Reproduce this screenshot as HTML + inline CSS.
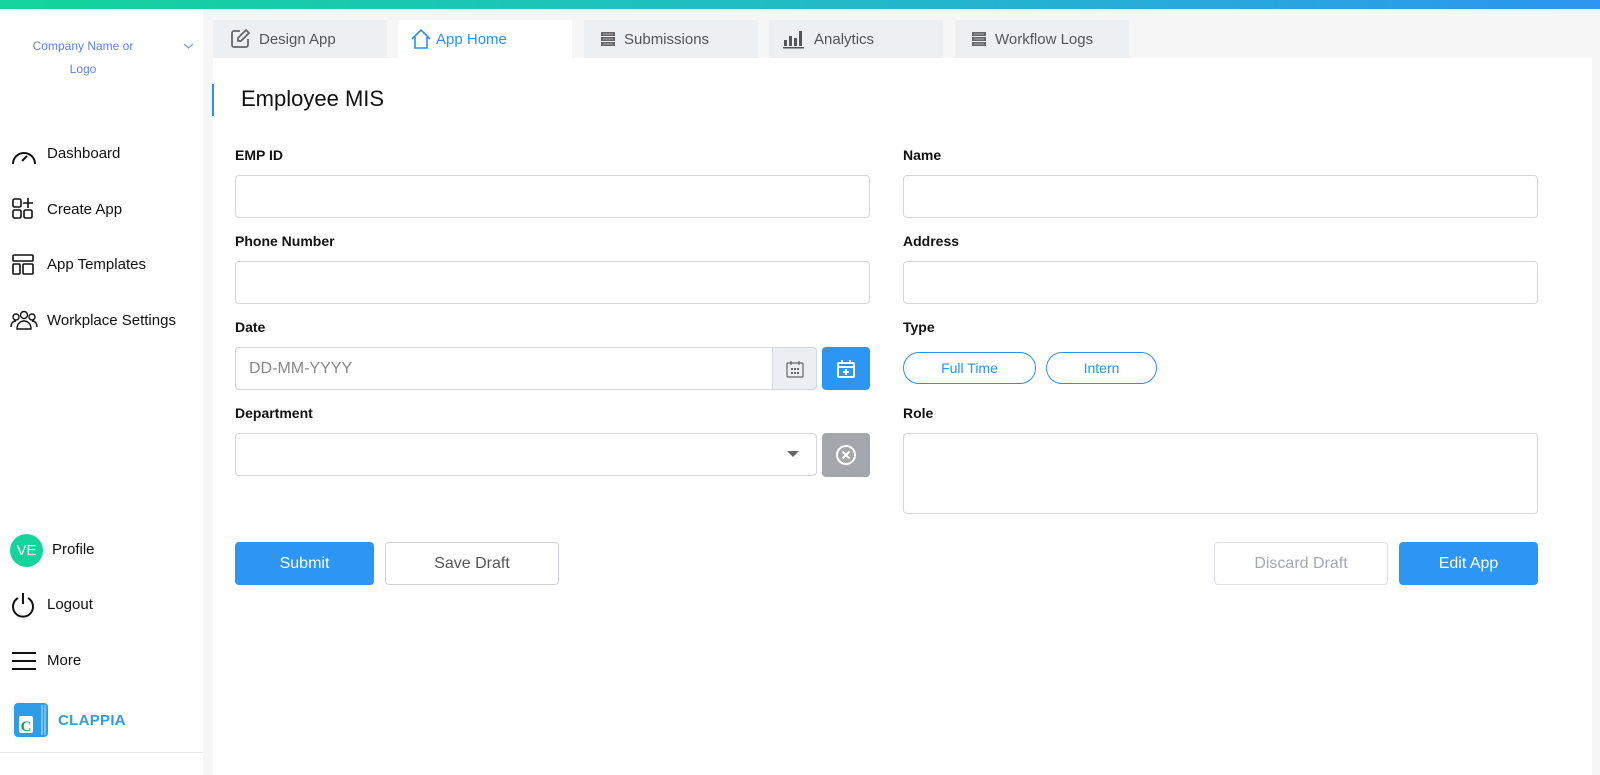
<!DOCTYPE html>
<html><head><meta charset="utf-8"><style>
*{box-sizing:border-box;margin:0;padding:0}
body{width:1600px;height:775px;overflow:hidden;font-family:"Liberation Sans",Arial,sans-serif;background:#f6f6f7;position:relative;color:#111}
.top{position:absolute;left:0;top:0;width:1600px;height:9px;background:linear-gradient(90deg,#13d49a,#22b9c9 55%,#2e95f0)}
.side{position:absolute;left:0;top:9px;width:203px;height:766px;background:#fff}
.abs{position:absolute}
.nav{position:absolute;left:47px;font-size:15px;color:#111}
.tab{position:absolute;top:20px;height:38px;width:174px;background:#eeeff1;color:#555;font-size:15px;display:flex;align-items:center;padding-left:16px;gap:8px}
.panel{position:absolute;left:213px;top:58px;width:1379px;height:717px;background:#fff}
.lbl{position:absolute;font-size:14px;font-weight:bold;color:#111}
.inp{position:absolute;height:43px;border:1px solid #d3d6da;border-radius:4px;background:#fff}
.btn{position:absolute;top:542px;height:43px;border-radius:4px;font-size:16px;display:flex;align-items:center;justify-content:center}
</style></head><body>
<div class="top"></div>
<div class="side"></div>
<div class="abs" style="left:20px;top:35px;width:126px;text-align:center;font-size:12px;line-height:23px;color:#5f82e6">Company Name or Logo</div>
<svg class="abs" style="left:183px;top:42px" width="11" height="8"><path d="M1 2l4.5 4L10 2" stroke="#7a9ae6" fill="none" stroke-width="1.2"/></svg>

<svg class="abs" style="left:10px;top:144px" width="28" height="22" viewBox="0 0 28 22"><path d="M3 20A11 11 0 1 1 25 20" stroke="#111" stroke-width="2" fill="none"/><path d="M12 17l5-5" stroke="#111" stroke-width="2"/></svg>
<div class="nav" style="top:145px">Dashboard</div>
<svg class="abs" style="left:12px;top:198px" width="24" height="22" viewBox="0 0 24 22" fill="none" stroke="#111" stroke-width="1.6"><rect x="1" y="1" width="8" height="8" rx="1.5"/><rect x="1" y="12" width="8" height="8" rx="1.5"/><rect x="12" y="12" width="8" height="8" rx="1.5"/><path d="M16 0v10M11 5h10"/></svg>
<div class="nav" style="top:201px">Create App</div>
<svg class="abs" style="left:12px;top:254px" width="24" height="22" viewBox="0 0 24 22" fill="none" stroke="#111" stroke-width="1.6"><rect x="1" y="1" width="20" height="6" rx="1"/><rect x="1" y="10" width="7" height="10" rx="1"/><rect x="11" y="10" width="10" height="10" rx="1"/></svg>
<div class="nav" style="top:256px">App Templates</div>
<svg class="abs" style="left:10px;top:310px" width="28" height="20" viewBox="0 0 28 20" fill="none" stroke="#111" stroke-width="1.4"><circle cx="14" cy="5" r="3.5"/><circle cx="6" cy="7" r="3"/><circle cx="22" cy="7" r="3"/><path d="M7 19c0-5 3-8 7-8s7 3 7 8zM1 17c0-4 2-6 5-6M27 17c0-4-2-6-5-6"/></svg>
<div class="nav" style="top:312px">Workplace Settings</div>

<div class="abs" style="left:10px;top:534px;width:33px;height:33px;border-radius:50%;background:#13d49a;color:#fff;font-size:15px;display:flex;align-items:center;justify-content:center">VE</div>
<div class="nav" style="top:541px;left:52px">Profile</div>
<svg class="abs" style="left:11px;top:592px" width="24" height="26" viewBox="0 0 24 26" fill="none" stroke="#111" stroke-width="2"><path d="M7 6A10 10 0 1 0 17 6"/><path d="M12 1v11"/></svg>
<div class="nav" style="top:596px">Logout</div>
<svg class="abs" style="left:11px;top:651px" width="26" height="20"><path d="M1 2h24M1 10h24M1 18h24" stroke="#111" stroke-width="2"/></svg>
<div class="nav" style="top:652px">More</div>
<svg class="abs" style="left:14px;top:702px" width="36" height="36" viewBox="0 0 36 36"><rect x="0" y="1" width="34" height="34" rx="4" fill="#2c9de6"/><path d="M28 3v30M31 3v30" stroke="#bfe3fa" stroke-width="1"/><rect x="5" y="14" width="14" height="17" rx="2" fill="#fff"/><text x="12" y="29" font-size="15" font-weight="bold" fill="#1aa352" text-anchor="middle" font-family="Liberation Serif">C</text></svg>
<div class="abs" style="left:58px;top:712px;font-size:15px;font-weight:bold;color:#2c9de6;letter-spacing:.3px">CLAPPIA</div>
<div class="abs" style="left:0;top:752px;width:203px;height:1px;background:#e6e6e6"></div>

<div class="tab" style="left:213px"><svg width="22" height="22" viewBox="0 0 22 22" fill="none" stroke="#666" stroke-width="1.8"><path d="M11 3H5a2 2 0 0 0-2 2v12a2 2 0 0 0 2 2h12a2 2 0 0 0 2-2v-6"/><path d="M17 2l3 3-8 8H9v-3z"/></svg>Design App</div>
<div class="tab" style="left:398px;background:#fff;color:#2d8ff0;padding-left:12px;gap:4px"><svg width="22" height="22" viewBox="0 0 22 22" fill="none" stroke="#2d8ff0" stroke-width="1.6"><path d="M2 11L11 2l9 9M5 9v11h12V9"/></svg>App Home</div>
<div class="tab" style="left:584px"><svg width="16" height="16" viewBox="0 0 16 16" fill="#666"><rect x="1" y="1" width="14" height="4"/><rect x="1" y="6" width="14" height="4"/><rect x="1" y="11" width="14" height="4"/><path d="M3 3h10M3 8h10M3 13h10" stroke="#aaa" stroke-width="1"/></svg>Submissions</div>
<div class="tab" style="left:769px;padding-left:13px"><svg width="24" height="20" viewBox="0 0 24 20" fill="#555"><rect x="2" y="11" width="3" height="6"/><rect x="7" y="7" width="3" height="10"/><rect x="12" y="9" width="3" height="8"/><rect x="17" y="2" width="3" height="15"/><rect x="1" y="18" width="21" height="1.5"/></svg>Analytics</div>
<div class="tab" style="left:955px"><svg width="16" height="16" viewBox="0 0 16 16" fill="#666"><rect x="1" y="1" width="14" height="4"/><rect x="1" y="6" width="14" height="4"/><rect x="1" y="11" width="14" height="4"/><path d="M3 3h10M3 8h10M3 13h10" stroke="#aaa" stroke-width="1"/></svg>Workflow Logs</div>

<div class="panel"></div>
<div class="abs" style="left:212px;top:84px;width:2px;height:32px;background:#2d8ff0"></div>
<div class="abs" style="left:241px;top:86px;font-size:22px;color:#111">Employee MIS</div>

<div class="lbl" style="left:235px;top:147px">EMP ID</div>
<div class="inp" style="left:235px;top:175px;width:635px"></div>
<div class="lbl" style="left:903px;top:147px">Name</div>
<div class="inp" style="left:903px;top:175px;width:635px"></div>
<div class="lbl" style="left:235px;top:233px">Phone Number</div>
<div class="inp" style="left:235px;top:261px;width:635px"></div>
<div class="lbl" style="left:903px;top:233px">Address</div>
<div class="inp" style="left:903px;top:261px;width:635px"></div>
<div class="lbl" style="left:235px;top:319px">Date</div>
<div class="inp" style="left:235px;top:347px;width:582px;padding:12px 13px;font-size:16px;color:#888">DD-MM-YYYY</div>
<div class="abs" style="left:772px;top:347px;width:45px;height:43px;background:#eceef1;border:1px solid #d3d6da;border-radius:0 4px 4px 0;display:flex;align-items:center;justify-content:center"><svg width="20" height="20" viewBox="0 0 20 20" fill="none" stroke="#666" stroke-width="1.2"><rect x="2" y="4" width="16" height="14" rx="1"/><path d="M6 2v4M14 2v4"/><g fill="#666" stroke="none"><rect x="6" y="9" width="2" height="2"/><rect x="9" y="9" width="2" height="2"/><rect x="12" y="9" width="2" height="2"/><rect x="6" y="13" width="2" height="2"/><rect x="9" y="13" width="2" height="2"/><rect x="12" y="13" width="2" height="2"/></g></svg></div>
<div class="abs" style="left:822px;top:347px;width:48px;height:43px;background:#2d95f3;border-radius:4px;display:flex;align-items:center;justify-content:center"><svg width="20" height="20" viewBox="0 0 20 20" fill="none" stroke="#fff" stroke-width="2"><rect x="2" y="4" width="16" height="14" rx="1"/><path d="M6 1v4M14 1v4M2 8h16M10 10v6M7 13h6"/></svg></div>
<div class="lbl" style="left:903px;top:319px">Type</div>
<div class="abs" style="left:903px;top:352px;width:133px;height:32px;border:1px solid #2d8ff0;border-radius:16px;color:#2d8ff0;font-size:14px;display:flex;align-items:center;justify-content:center">Full Time</div>
<div class="abs" style="left:1046px;top:352px;width:111px;height:32px;border:1px solid #2d8ff0;border-radius:16px;color:#2d8ff0;font-size:14px;display:flex;align-items:center;justify-content:center">Intern</div>
<div class="lbl" style="left:235px;top:405px">Department</div>
<div class="inp" style="left:235px;top:433px;width:582px"></div>
<svg class="abs" style="left:787px;top:451px" width="12" height="7"><path d="M0 0h12L6 6z" fill="#666"/></svg>
<div class="abs" style="left:822px;top:433px;width:48px;height:44px;background:#a3a6aa;border-radius:4px;display:flex;align-items:center;justify-content:center"><svg width="22" height="22" viewBox="0 0 22 22" fill="none" stroke="#fff" stroke-width="2"><circle cx="11" cy="11" r="9"/><path d="M7.5 7.5l7 7M14.5 7.5l-7 7"/></svg></div>
<div class="lbl" style="left:903px;top:405px">Role</div>
<div class="inp" style="left:903px;top:433px;width:635px;height:81px"></div>

<div class="btn" style="left:235px;width:139px;background:#2d95f3;color:#fff">Submit</div>
<div class="btn" style="left:385px;width:174px;border:1px solid #cfd2d6;color:#555;background:#fff">Save Draft</div>
<div class="btn" style="left:1214px;width:174px;border:1px solid #dcdfe3;color:#a5a9ae;background:#fff">Discard Draft</div>
<div class="btn" style="left:1399px;width:139px;background:#2d95f3;color:#fff">Edit App</div>
</body></html>
